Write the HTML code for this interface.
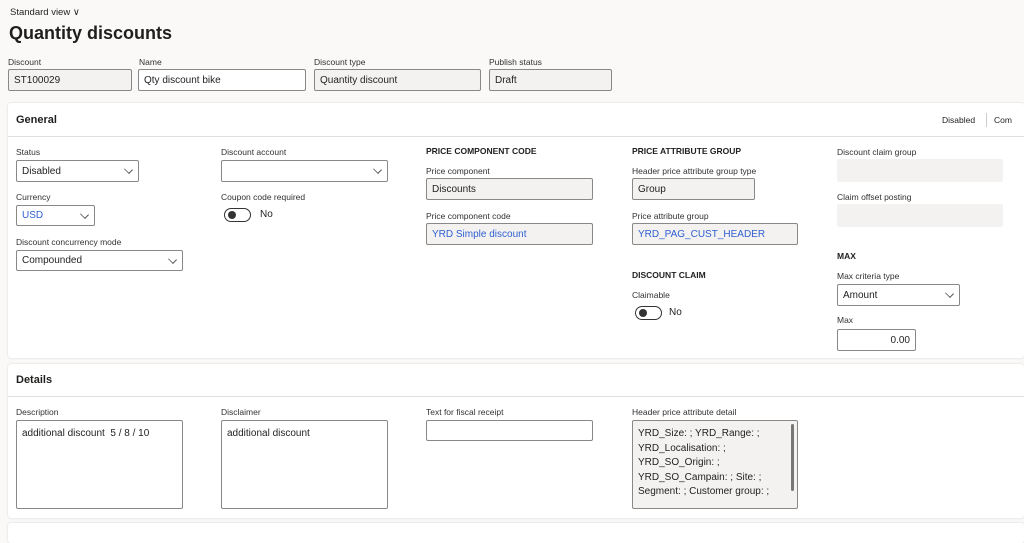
<!DOCTYPE html><html><head><style>
*{box-sizing:border-box;margin:0;padding:0}
body{width:1024px;height:533px;background:#faf9f8;font-family:"Liberation Sans",sans-serif;color:#201f1e;position:relative;overflow:hidden}
.a{position:absolute;white-space:nowrap}
.l{font-size:8.5px;color:#323130}
.i{position:absolute;border:1px solid #8a8886;border-radius:2px;background:#fff;font-size:10px;padding:0 5px;display:flex;align-items:center}
.g{background:#f3f2f1}
.b{color:#2f5fd0}
.card{position:absolute;left:8px;right:0;background:#fff;border-radius:3px;box-shadow:0 0 2px rgba(0,0,0,.15)}
.h{font-size:8.5px;font-weight:bold}
.chev{position:absolute;right:6px;top:5px;width:7px;height:7px;border-right:1px solid #555;border-bottom:1px solid #555;transform:rotate(45deg) scale(1,.8)}
.tg{position:absolute;width:27px;height:14px;border:1px solid #333;border-radius:7px}
.tg:after{content:"";position:absolute;left:3px;top:2px;width:8px;height:8px;border-radius:50%;background:#333}
.t{font-size:10px;line-height:14.5px}
</style></head><body>
<div class="a" style="left:10px;top:7px;font-size:9.5px">Standard view ∨</div>
<div class="a" style="left:9px;top:23px;font-size:18px;font-weight:bold">Quantity discounts</div>
<div class="a l" style="left:8px;top:57px">Discount</div>
<div class="i g" style="left:8px;top:69px;width:124px;height:22px">ST100029</div>
<div class="a l" style="left:139px;top:57px">Name</div>
<div class="i" style="left:138px;top:69px;width:168px;height:22px">Qty discount bike</div>
<div class="a l" style="left:314px;top:57px">Discount type</div>
<div class="i g" style="left:314px;top:69px;width:167px;height:22px">Quantity discount</div>
<div class="a l" style="left:489px;top:57px">Publish status</div>
<div class="i g" style="left:489px;top:69px;width:123px;height:22px">Draft</div>

<div class="card" style="top:103px;height:255px"></div>
<div class="a" style="left:16px;top:114px;font-size:11px;font-weight:bold">General</div>
<div class="a" style="left:942px;top:115px;font-size:8.5px">Disabled</div>
<div class="a" style="left:986px;top:113px;width:1px;height:14px;background:#ccc"></div>
<div class="a" style="left:994px;top:115px;font-size:8.5px">Com</div>
<div class="a" style="left:8px;right:0;top:136px;height:1px;background:#e1dfdd"></div>

<div class="a l" style="left:16px;top:147px">Status</div>
<div class="i" style="left:16px;top:160px;width:123px;height:22px">Disabled<span class="chev"></span></div>
<div class="a l" style="left:16px;top:192px">Currency</div>
<div class="i b" style="left:16px;top:205px;width:79px;height:21px">USD<span class="chev"></span></div>
<div class="a l" style="left:16px;top:237px">Discount concurrency mode</div>
<div class="i" style="left:16px;top:250px;width:167px;height:21px">Compounded<span class="chev"></span></div>

<div class="a l" style="left:221px;top:147px">Discount account</div>
<div class="i" style="left:221px;top:160px;width:167px;height:22px"><span class="chev"></span></div>
<div class="a l" style="left:221px;top:192px">Coupon code required</div>
<div class="tg" style="left:224px;top:208px"></div>
<div class="a" style="left:260px;top:209px;font-size:10px">No</div>

<div class="a h" style="left:426px;top:146px">PRICE COMPONENT CODE</div>
<div class="a l" style="left:426px;top:166px">Price component</div>
<div class="i g" style="left:426px;top:178px;width:167px;height:22px">Discounts</div>
<div class="a l" style="left:426px;top:211px">Price component code</div>
<div class="i g b" style="left:426px;top:223px;width:167px;height:22px">YRD Simple discount</div>

<div class="a h" style="left:632px;top:146px">PRICE ATTRIBUTE GROUP</div>
<div class="a l" style="left:632px;top:166px">Header price attribute group type</div>
<div class="i g" style="left:632px;top:178px;width:123px;height:22px">Group</div>
<div class="a l" style="left:632px;top:211px">Price attribute group</div>
<div class="i g b" style="left:632px;top:223px;width:166px;height:22px">YRD_PAG_CUST_HEADER</div>
<div class="a h" style="left:632px;top:270px">DISCOUNT CLAIM</div>
<div class="a l" style="left:632px;top:290px">Claimable</div>
<div class="tg" style="left:635px;top:306px"></div>
<div class="a" style="left:669px;top:307px;font-size:10px">No</div>

<div class="a l" style="left:837px;top:147px">Discount claim group</div>
<div class="a" style="left:837px;top:159px;width:166px;height:23px;background:#f3f2f1;border-radius:2px"></div>
<div class="a l" style="left:837px;top:192px">Claim offset posting</div>
<div class="a" style="left:837px;top:204px;width:166px;height:23px;background:#f3f2f1;border-radius:2px"></div>
<div class="a h" style="left:837px;top:251px">MAX</div>
<div class="a l" style="left:837px;top:271px">Max criteria type</div>
<div class="i" style="left:837px;top:284px;width:123px;height:22px">Amount<span class="chev"></span></div>
<div class="a l" style="left:837px;top:315px">Max</div>
<div class="i" style="left:837px;top:329px;width:79px;height:22px;justify-content:flex-end">0.00</div>

<div class="card" style="top:364px;height:154px"></div>
<div class="a" style="left:16px;top:374px;font-size:11px;font-weight:bold">Details</div>
<div class="a" style="left:8px;right:0;top:396px;height:1px;background:#e1dfdd"></div>
<div class="a l" style="left:16px;top:407px">Description</div>
<div class="i t" style="left:16px;top:420px;width:167px;height:89px;align-items:flex-start;padding-top:6px">additional discount&nbsp; 5 / 8 / 10</div>
<div class="a l" style="left:221px;top:407px">Disclaimer</div>
<div class="i t" style="left:221px;top:420px;width:167px;height:89px;align-items:flex-start;padding-top:6px">additional discount</div>
<div class="a l" style="left:426px;top:407px">Text for fiscal receipt</div>
<div class="i" style="left:426px;top:420px;width:167px;height:21px"></div>
<div class="a l" style="left:632px;top:407px">Header price attribute detail</div>
<div class="i g t" style="left:632px;top:420px;width:166px;height:89px;display:block;padding-top:6px;white-space:normal">YRD_Size: ; YRD_Range: ;<br>YRD_Localisation: ;<br>YRD_SO_Origin: ;<br>YRD_SO_Campain: ; Site: ;<br>Segment: ; Customer group: ;
<div style="position:absolute;left:158px;top:3px;width:3px;height:67px;background:#777;border-radius:2px"></div></div>
<div class="card" style="top:523px;height:20px"></div>
</body></html>
